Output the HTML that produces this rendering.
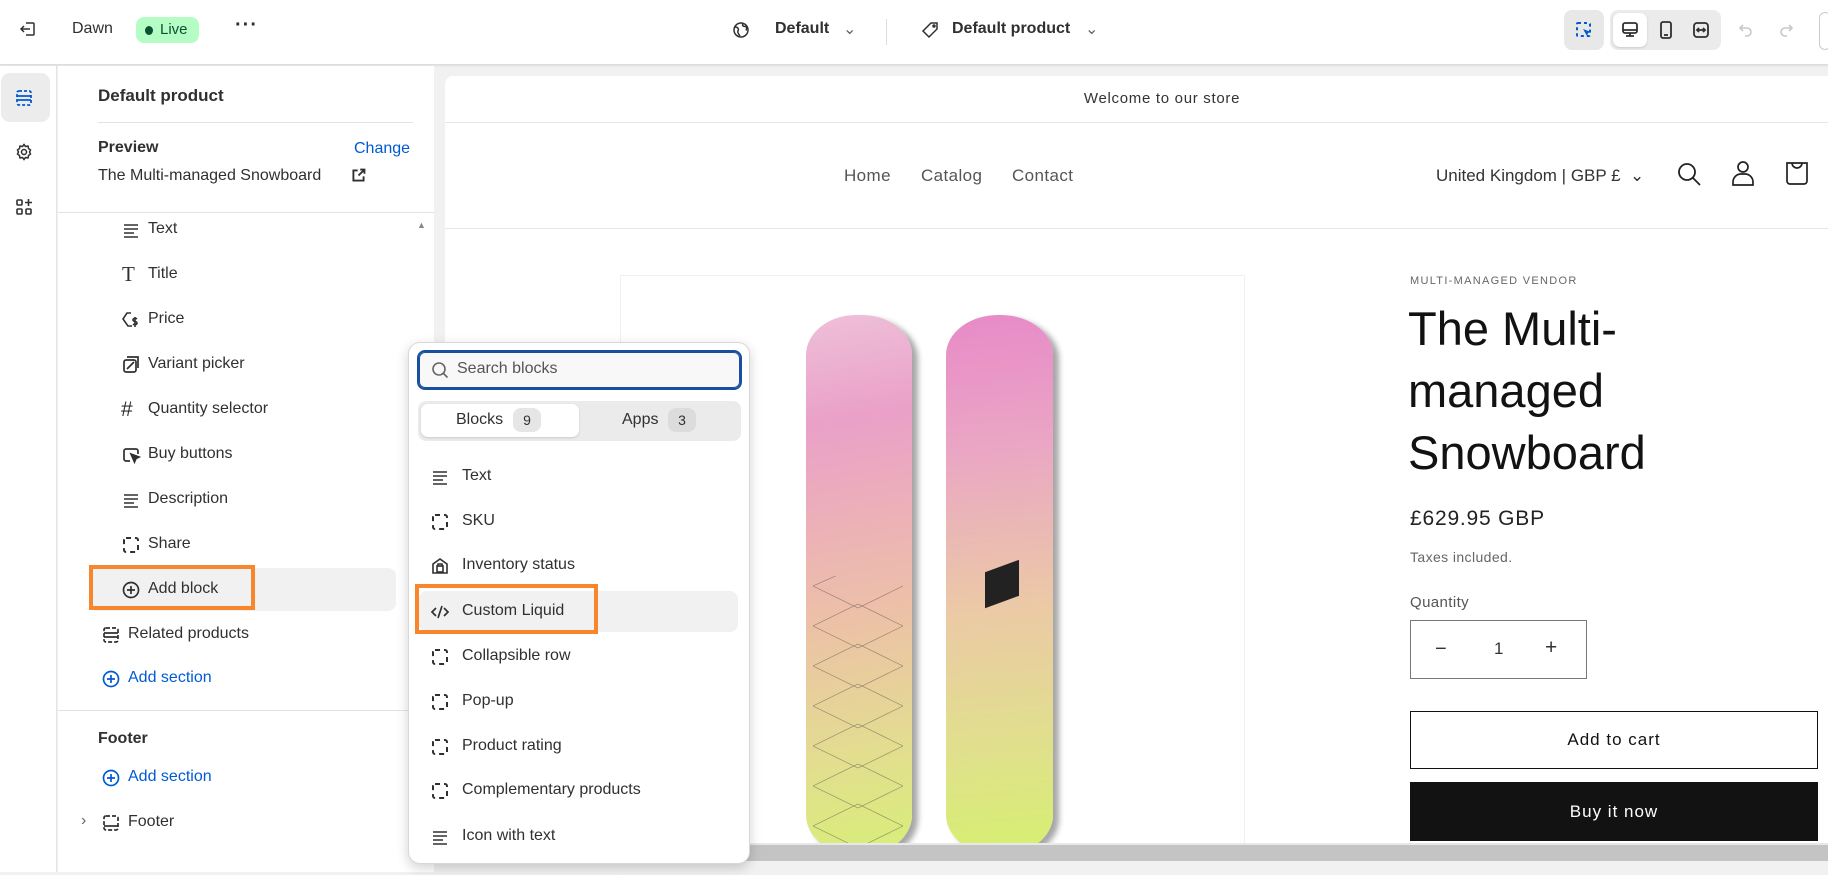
<!DOCTYPE html>
<html><head><meta charset="utf-8"><style>
*{box-sizing:border-box;margin:0;padding:0}
body{width:1828px;height:872px;overflow:hidden;background:#f1f1f1;font-family:"Liberation Sans",sans-serif;color:#303030;position:relative}
.a{position:absolute}
.t{font-size:16px;white-space:nowrap}
svg{display:block}
.ic{position:absolute;width:20px;height:20px}
.pv{font-family:"Liberation Sans",sans-serif;color:#222}
</style></head><body>
<!-- top bar -->
<div class="a" style="left:0;top:0;width:1828px;height:65px;background:#fff;border-bottom:1px solid #ddd;box-shadow:0 1px 2px rgba(0,0,0,.08)"></div>
<svg class="ic" style="left:18px;top:19px" viewBox="0 0 20 20" fill="none" stroke="#303030" stroke-width="1.5"><path d="M8 4h7a1 1 0 0 1 1 1v10a1 1 0 0 1-1 1H8M3 10h9M6 7l-3 3 3 3"/></svg>
<div class="a t" style="left:72px;top:20px;font-size:16px">Dawn</div>
<div class="a" style="left:136px;top:17px;width:63px;height:26px;border-radius:8px;background:#b4fec5"></div>
<div class="a" style="left:145px;top:26px;width:8px;height:9px;border-radius:50%;background:#0c5132"></div>
<div class="a t" style="left:160px;top:21px;font-size:15px;color:#0c5132">Live</div>
<div class="a t" style="left:235px;top:14px;font-size:20px;font-weight:bold;letter-spacing:1px">···</div>
<svg class="ic" style="left:731px;top:20px" viewBox="0 0 20 20" fill="none" stroke="#303030" stroke-width="1.5"><circle cx="10" cy="10" r="7"/><path d="M4 7c3 0 4 2 3 4s1 3 2 5M12 3.5c-1 2 0 3 2 3s2 2 1 4"/></svg>
<div class="a t" style="left:775px;top:20px;font-weight:bold;font-size:16px">Default</div>
<div class="a t" style="left:843px;top:19px;color:#666">⌄</div>
<div class="a" style="left:886px;top:19px;width:1px;height:26px;background:#ddd"></div>
<svg class="ic" style="left:920px;top:20px" viewBox="0 0 20 20" fill="none" stroke="#303030" stroke-width="1.5"><path d="M11 3h6v6l-8 8-6-6z"/><circle cx="14" cy="6" r="1"/></svg>
<div class="a t" style="left:952px;top:20px;font-weight:bold;font-size:16px">Default product</div>
<div class="a t" style="left:1085px;top:19px;color:#666">⌄</div>
<div class="a" style="left:1564px;top:10px;width:40px;height:40px;border-radius:8px;background:#e8e8e8"></div>
<svg class="ic" style="left:1574px;top:20px" viewBox="0 0 20 20" fill="none" stroke="#005bd3" stroke-width="2"><rect x="3" y="3" width="13" height="13" rx="1" stroke-dasharray="3 3"/><path d="M9 9l8 3-3 1-1 3z" fill="#005bd3" stroke="none"/></svg>
<div class="a" style="left:1610px;top:10px;width:111px;height:40px;border-radius:8px;background:#ebebeb"></div>
<div class="a" style="left:1613px;top:13px;width:34px;height:34px;border-radius:7px;background:#fff;box-shadow:0 1px 2px rgba(0,0,0,.15)"></div>
<svg class="ic" style="left:1620px;top:20px" viewBox="0 0 20 20" fill="none" stroke="#303030" stroke-width="1.8"><rect x="3" y="3" width="14" height="10" rx="2"/><path d="M3 10h14M10 13v3M6 16h8"/></svg>
<svg class="ic" style="left:1656px;top:20px" viewBox="0 0 20 20" fill="none" stroke="#303030" stroke-width="1.8"><rect x="5" y="2" width="10" height="16" rx="2"/><path d="M8 15h4"/></svg>
<svg class="ic" style="left:1691px;top:20px" viewBox="0 0 20 20" fill="none" stroke="#303030" stroke-width="1.8"><rect x="3" y="3" width="14" height="14" rx="3"/><path d="M6 10h8M8 8l-2 2 2 2M12 8l2 2-2 2"/></svg>
<svg class="ic" style="left:1736px;top:20px" viewBox="0 0 20 20" fill="none" stroke="#c8c8c8" stroke-width="1.6"><path d="M7 5L4 8l3 3M4 8h7a4 4 0 0 1 0 8H9"/></svg>
<svg class="ic" style="left:1776px;top:20px" viewBox="0 0 20 20" fill="none" stroke="#c8c8c8" stroke-width="1.6"><path d="M13 5l3 3-3 3M16 8H9a4 4 0 0 0 0 8h2"/></svg>
<div class="a" style="left:1819px;top:12px;width:12px;height:38px;border:1px solid #ccc;border-radius:8px;background:#fff"></div>

<!-- left rail -->
<div class="a" style="left:0;top:66px;width:57px;height:806px;background:#fff;border-right:1px solid #e3e3e3"></div>
<div class="a" style="left:1px;top:73px;width:49px;height:49px;border-radius:9px;background:#ececec"></div>
<svg class="ic" style="left:14px;top:88px" viewBox="0 0 20 20" fill="none" stroke="#005bd3" stroke-width="1.8"><rect x="3" y="3" width="14" height="14" rx="2" stroke-dasharray="3 2"/><path d="M3 8h14M3 12h14"/></svg>
<svg class="ic" style="left:14px;top:142px" viewBox="0 0 20 20" fill="none" stroke="#303030" stroke-width="1.5"><circle cx="10" cy="10" r="2.5"/><path d="M10 2.5l1.5 2 2.5-.5.5 2.5 2 1.5-1 2 1 2-2 1.5-.5 2.5-2.5-.5-1.5 2-1.5-2-2.5.5-.5-2.5-2-1.5 1-2-1-2 2-1.5.5-2.5 2.5.5z"/></svg>
<svg class="ic" style="left:14px;top:197px" viewBox="0 0 20 20" fill="none" stroke="#303030" stroke-width="1.6"><rect x="3" y="3" width="5" height="5" rx="1"/><rect x="3" y="12" width="5" height="5" rx="1"/><rect x="12" y="12" width="5" height="5" rx="1"/><path d="M14.5 2v7M11 5.5h7"/></svg>

<!-- sidebar -->
<div class="a" style="left:58px;top:66px;width:376px;height:806px;background:#fff"></div>
<div class="a t" style="left:98px;top:86px;font-weight:bold;font-size:17px">Default product</div>
<div class="a" style="left:98px;top:122px;width:315px;height:1px;background:#e3e3e3"></div>
<div class="a t" style="left:98px;top:139px;font-weight:bold;font-size:16px">Preview</div>
<div class="a t" style="left:354px;top:140px;color:#005bd3;font-size:16px">Change</div>
<div class="a t" style="left:98px;top:167px;font-size:16px">The Multi-managed Snowboard</div>
<svg class="ic" style="left:350px;top:167px;width:17px;height:17px" viewBox="0 0 20 20" fill="none" stroke="#303030" stroke-width="2.2"><path d="M9 4H4v12h12v-5M12 3h5v5M17 3l-7 7"/></svg>
<div class="a" style="left:58px;top:212px;width:376px;height:1px;background:#e3e3e3"></div>
<div class="a" style="left:417px;top:220px;font-size:9px;color:#888">▲</div>

<svg class="ic" style="left:121px;top:220px" viewBox="0 0 20 20" stroke="#303030" stroke-width="1.6"><path d="M3 5h14M3 9h14M3 13h10M3 17h14"/></svg>
<div class="a t" style="left:148px;top:220px">Text</div>
<div class="a" style="left:122px;top:262px;font-family:'Liberation Serif',serif;font-size:21px;color:#303030">T</div>
<div class="a t" style="left:148px;top:265px">Title</div>
<svg class="ic" style="left:121px;top:310px" viewBox="0 0 20 20" fill="none" stroke="#303030" stroke-width="1.6"><path d="M10 3H6L2 9l5 7h4"/><path d="M16 9c-1-1-4-1-4 1s4 1 4 3-3 2-4 1M14 7v10"/></svg>
<div class="a t" style="left:148px;top:310px">Price</div>
<svg class="ic" style="left:121px;top:355px" viewBox="0 0 20 20" fill="none" stroke="#303030" stroke-width="1.7"><rect x="3" y="5" width="12" height="12" rx="2"/><path d="M6 2h11v11M6 14l7-7"/></svg>
<div class="a t" style="left:148px;top:355px">Variant picker</div>
<div class="a t" style="left:121px;top:398px;font-size:21px">#</div>
<div class="a t" style="left:148px;top:400px">Quantity selector</div>
<svg class="ic" style="left:121px;top:445px" viewBox="0 0 20 20" fill="none" stroke="#303030" stroke-width="1.7"><path d="M9 16H5a2 2 0 0 1-2-2V6a2 2 0 0 1 2-2h10a2 2 0 0 1 2 2v3"/><path d="M10 9l8 3-3 1.5L13.5 17z" fill="#303030"/></svg>
<div class="a t" style="left:148px;top:445px">Buy buttons</div>
<svg class="ic" style="left:121px;top:490px" viewBox="0 0 20 20" stroke="#303030" stroke-width="1.6"><path d="M3 5h14M3 9h14M3 13h10M3 17h14"/></svg>
<div class="a t" style="left:148px;top:490px">Description</div>
<svg class="ic" style="left:121px;top:535px" viewBox="0 0 20 20" fill="none" stroke="#303030" stroke-width="2"><rect x="3" y="3" width="14" height="14" rx="2" stroke-dasharray="5 4"/></svg>
<div class="a t" style="left:148px;top:535px">Share</div>
<div class="a" style="left:89px;top:568px;width:307px;height:43px;border-radius:8px;background:#f1f1f1"></div>
<div class="a" style="left:89px;top:565px;width:166px;height:45px;border:4px solid #f7862c"></div>
<svg class="ic" style="left:121px;top:580px" viewBox="0 0 20 20" fill="none" stroke="#303030" stroke-width="1.7"><circle cx="10" cy="10" r="7.5"/><path d="M10 6v8M6 10h8"/></svg>
<div class="a t" style="left:148px;top:580px;color:#303030">Add block</div>
<svg class="ic" style="left:101px;top:625px" viewBox="0 0 20 20" fill="none" stroke="#303030" stroke-width="1.7"><rect x="3" y="3" width="14" height="14" rx="2" stroke-dasharray="4 2"/><path d="M3 8h14M3 12h14"/></svg>
<div class="a t" style="left:128px;top:625px">Related products</div>
<svg class="ic" style="left:101px;top:669px" viewBox="0 0 20 20" fill="none" stroke="#005bd3" stroke-width="1.7"><circle cx="10" cy="10" r="7.5"/><path d="M10 6v8M6 10h8"/></svg>
<div class="a t" style="left:128px;top:669px;color:#005bd3">Add section</div>
<div class="a" style="left:58px;top:710px;width:350px;height:1px;background:#e3e3e3"></div>
<div class="a t" style="left:98px;top:730px;font-weight:bold">Footer</div>
<svg class="ic" style="left:101px;top:768px" viewBox="0 0 20 20" fill="none" stroke="#005bd3" stroke-width="1.7"><circle cx="10" cy="10" r="7.5"/><path d="M10 6v8M6 10h8"/></svg>
<div class="a t" style="left:128px;top:768px;color:#005bd3">Add section</div>
<div class="a t" style="left:81px;top:812px;color:#666">›</div>
<svg class="ic" style="left:101px;top:813px" viewBox="0 0 20 20" fill="none" stroke="#303030" stroke-width="1.7"><rect x="3" y="3" width="14" height="14" rx="2" stroke-dasharray="4 2"/><path d="M3 13h14"/></svg>
<div class="a t" style="left:128px;top:813px">Footer</div>

<!-- preview -->
<div class="a pv" style="left:445px;top:76px;width:1383px;height:796px;background:#fff;border-radius:8px 0 0 0">
 <div class="a t" style="left:0;top:14px;text-align:center;font-size:15px;letter-spacing:.7px;color:#333;width:1434px">Welcome to our store</div>
 <div class="a" style="left:0;top:46px;width:1383px;height:1px;background:#e6e6e6"></div>
 <div class="a t" style="left:399px;top:90px;font-size:17px;color:#555;letter-spacing:.4px">Home</div>
 <div class="a t" style="left:476px;top:90px;font-size:17px;color:#555;letter-spacing:.4px">Catalog</div>
 <div class="a t" style="left:567px;top:90px;font-size:17px;color:#555;letter-spacing:.4px">Contact</div>
 <div class="a t" style="left:991px;top:90px;font-size:17px;color:#333">United Kingdom | GBP £ &nbsp;⌄</div>
 <svg class="a" style="left:1230px;top:84px" width="28" height="28" viewBox="0 0 28 28" fill="none" stroke="#222" stroke-width="1.8"><circle cx="12" cy="12" r="8"/><path d="M18 18l7 7"/></svg>
 <svg class="a" style="left:1284px;top:83px" width="28" height="28" viewBox="0 0 28 28" fill="none" stroke="#222" stroke-width="1.7"><circle cx="14" cy="8" r="5"/><path d="M4 26v-3a8 8 0 0 1 8-8h4a8 8 0 0 1 8 8v3z"/></svg>
 <svg class="a" style="left:1338px;top:83px" width="28" height="28" viewBox="0 0 28 28" fill="none" stroke="#222" stroke-width="1.7"><path d="M4 4h20v18a3 3 0 0 1-3 3H7a3 3 0 0 1-3-3z"/><path d="M9 4a5 5 0 0 0 10 0"/></svg>
 <div class="a" style="left:0;top:152px;width:1383px;height:1px;background:#e6e6e6"></div>
 <div class="a" style="left:175px;top:199px;width:625px;height:600px;border:1px solid #f0f0f0;border-bottom:none"></div>
 <div class="a" style="left:361px;top:239px;width:106px;height:540px;border-radius:50px/40px;background:linear-gradient(170deg,#eec0d8 0%,#eaa0c8 20%,#edc0a8 55%,#e3dd90 80%,#d8ef78 100%);box-shadow:6px 4px 6px rgba(0,0,0,.35)"></div>
 <div class="a" style="left:501px;top:239px;width:107px;height:540px;border-radius:52px/40px;background:linear-gradient(175deg,#e88ac8 0%,#eaa6c4 25%,#ebcaa5 55%,#e0e08c 80%,#d6f070 100%);box-shadow:6px 4px 6px rgba(0,0,0,.35)"></div>
 <svg class="a" style="left:368px;top:500px" width="90" height="270" viewBox="0 0 90 270" fill="none" stroke="#444" stroke-width=".6" opacity=".55"><path d="M0 10l45 22 45-22M0 10l45-20M0 50l45 22 45-22M0 50l45-22 45 22M0 90l45 22 45-22M0 90l45-22 45 22M0 130l45 22 45-22M0 130l45-22 45 22M0 170l45 22 45-22M0 170l45-22 45 22M0 210l45 22 45-22M0 210l45-22 45 22M0 250l45 22 45-22M0 250l45-22 45 22"/></svg>
 <div class="a" style="left:540px;top:490px;width:34px;height:36px;background:#222;transform:skewY(-20deg)"></div>
 <div class="a" style="left:965px;top:199px;font-size:11px;letter-spacing:1.3px;color:#666">MULTI-MANAGED VENDOR</div>
 <div class="a" style="left:963px;top:222px;font-size:47px;line-height:62px;color:#121212">The Multi-<br>managed<br>Snowboard</div>
 <div class="a t" style="left:965px;top:431px;font-size:21px;letter-spacing:.8px;color:#222">£629.95 GBP</div>
 <div class="a t" style="left:965px;top:473px;font-size:14px;color:#666;letter-spacing:.4px">Taxes included.</div>
 <div class="a t" style="left:965px;top:518px;font-size:15px;color:#555;letter-spacing:.4px">Quantity</div>
 <div class="a" style="left:965px;top:544px;width:177px;height:59px;border:1px solid #777"></div>
 <div class="a t" style="left:990px;top:562px;font-size:20px;color:#333">−</div>
 <div class="a t" style="left:1049px;top:563px;font-size:17px;color:#333">1</div>
 <div class="a t" style="left:1100px;top:560px;font-size:21px;color:#333">+</div>
 <div class="a" style="left:965px;top:635px;width:408px;height:58px;border:1.5px solid #121212"></div>
 <div class="a t" style="left:965px;top:654px;width:408px;text-align:center;font-size:17px;letter-spacing:1px;color:#121212">Add to cart</div>
 <div class="a" style="left:965px;top:706px;width:408px;height:59px;background:#121212"></div>
 <div class="a t" style="left:965px;top:726px;width:408px;text-align:center;font-size:17px;letter-spacing:1px;color:#fff">Buy it now</div>
 <div class="a" style="left:0;top:767px;width:1383px;height:18px;background:#c4c4c4;border-top:2px solid #e8e8e8"></div>
 <div class="a" style="left:0;top:785px;width:1383px;height:11px;background:#f1f1f1"></div>
</div>

<!-- popup -->
<div class="a" style="left:408px;top:342px;width:342px;height:522px;background:#fff;border-radius:12px;border:1px solid #d8d8d8;box-shadow:0 4px 12px rgba(0,0,0,.18)"></div>
<div class="a" style="left:417px;top:350px;width:325px;height:40px;border:2px solid #1a4fa0;border-radius:8px;background:#f8f8f8;box-shadow:0 0 0 1px #1a4fa0 inset"></div>
<svg class="ic" style="left:430px;top:360px" viewBox="0 0 20 20" fill="none" stroke="#666" stroke-width="1.6"><circle cx="9" cy="9" r="6"/><path d="M13.5 13.5l4 4"/></svg>
<div class="a t" style="left:457px;top:360px;color:#555">Search blocks</div>
<div class="a" style="left:418px;top:401px;width:323px;height:40px;border-radius:8px;background:#ebebeb"></div>
<div class="a" style="left:421px;top:404px;width:158px;height:33px;border-radius:7px;background:#fff;box-shadow:0 1px 2px rgba(0,0,0,.15)"></div>
<div class="a t" style="left:456px;top:411px;font-size:16px">Blocks</div>
<div class="a" style="left:513px;top:408px;width:28px;height:24px;border-radius:8px;background:#e6e6e6;text-align:center;font-size:14px;line-height:24px">9</div>
<div class="a t" style="left:622px;top:411px;font-size:16px">Apps</div>
<div class="a" style="left:668px;top:408px;width:28px;height:24px;border-radius:8px;background:#dcdcdc;text-align:center;font-size:14px;line-height:24px">3</div>

<svg class="ic" style="left:430px;top:467px" viewBox="0 0 20 20" stroke="#303030" stroke-width="1.6"><path d="M3 5h14M3 9h14M3 13h10M3 17h14"/></svg>
<div class="a t" style="left:462px;top:467px">Text</div>
<svg class="ic" style="left:430px;top:512px" viewBox="0 0 20 20" fill="none" stroke="#303030" stroke-width="2"><rect x="3" y="3" width="14" height="14" rx="2" stroke-dasharray="5 4"/></svg>
<div class="a t" style="left:462px;top:512px">SKU</div>
<svg class="ic" style="left:430px;top:556px" viewBox="0 0 20 20" fill="none" stroke="#303030" stroke-width="1.6"><path d="M3 17V8l7-5 7 5v9z"/><rect x="7" y="10" width="6" height="6"/><path d="M8 10V8h4v2"/></svg>
<div class="a t" style="left:462px;top:556px">Inventory status</div>
<div class="a" style="left:419px;top:591px;width:319px;height:41px;border-radius:8px;background:#f1f1f1"></div>
<div class="a" style="left:415px;top:584px;width:183px;height:50px;border:4px solid #f7862c"></div>
<svg class="ic" style="left:430px;top:602px" viewBox="0 0 20 20" fill="none" stroke="#303030" stroke-width="1.7"><path d="M6 6l-4 4 4 4M14 6l4 4-4 4M12 4l-4 12"/></svg>
<div class="a t" style="left:462px;top:602px">Custom Liquid</div>
<svg class="ic" style="left:430px;top:647px" viewBox="0 0 20 20" fill="none" stroke="#303030" stroke-width="2"><rect x="3" y="3" width="14" height="14" rx="2" stroke-dasharray="5 4"/></svg>
<div class="a t" style="left:462px;top:647px">Collapsible row</div>
<svg class="ic" style="left:430px;top:692px" viewBox="0 0 20 20" fill="none" stroke="#303030" stroke-width="2"><rect x="3" y="3" width="14" height="14" rx="2" stroke-dasharray="5 4"/></svg>
<div class="a t" style="left:462px;top:692px">Pop-up</div>
<svg class="ic" style="left:430px;top:737px" viewBox="0 0 20 20" fill="none" stroke="#303030" stroke-width="2"><rect x="3" y="3" width="14" height="14" rx="2" stroke-dasharray="5 4"/></svg>
<div class="a t" style="left:462px;top:737px">Product rating</div>
<svg class="ic" style="left:430px;top:781px" viewBox="0 0 20 20" fill="none" stroke="#303030" stroke-width="2"><rect x="3" y="3" width="14" height="14" rx="2" stroke-dasharray="5 4"/></svg>
<div class="a t" style="left:462px;top:781px">Complementary products</div>
<svg class="ic" style="left:430px;top:827px" viewBox="0 0 20 20" stroke="#303030" stroke-width="1.6"><path d="M3 5h14M3 9h14M3 13h10M3 17h14"/></svg>
<div class="a t" style="left:462px;top:827px">Icon with text</div>
</body></html>
